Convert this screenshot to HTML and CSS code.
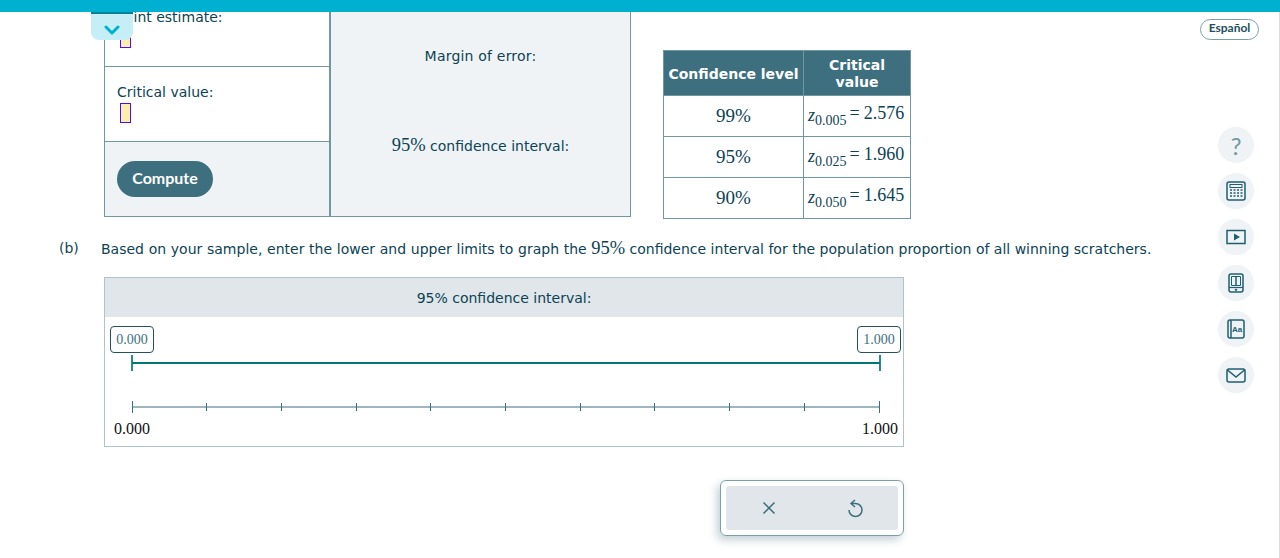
FILE: index.html
```html
<!DOCTYPE html>
<html lang="en">
<head>
    <meta charset="UTF-8">
    <title>Confidence interval</title>
    <link rel="stylesheet" href="styles.css">
</head>
<body>
    <div class="page">
        <div class="topbar"></div>
        <button class="collapse-tab" type="button">
            <svg width="16" height="10" viewBox="0 0 16 10"><path d="M2 2l6 6 6-6" fill="none" stroke="#00b0d0" stroke-width="3" stroke-linecap="round" stroke-linejoin="round"/></svg>
        </button>
        <div class="layout">
            <div class="content">
                <div class="top-row">
                    <div class="calc-box">
                        <div class="inputs">
                            <div class="input-cell">
                                <div>Point estimate:</div>
                                <span class="answer"></span>
                            </div>
                            <div class="input-cell">
                                <div>Critical value:</div>
                                <span class="answer"></span>
                            </div>
                            <div class="button-cell">
                                <button class="compute" type="button">Compute</button>
                            </div>
                        </div>
                        <div class="results">
                            <div class="result-moe">Margin of error:</div>
                            <div class="result-ci"><span class="math big">95%</span> confidence interval:</div>
                        </div>
                    </div>
                    <table class="lookup">
                        <tr><th class="col-level">Confidence level</th><th>Critical<br>value</th></tr>
                        <tr><td class="math">99%</td><td class="zval"><span class="zsym"><i>z</i><sub>0.005</sub></span><span class="eq">=</span><span class="znum">2.576</span></td></tr>
                        <tr><td class="math">95%</td><td class="zval"><span class="zsym"><i>z</i><sub>0.025</sub></span><span class="eq">=</span><span class="znum">1.960</span></td></tr>
                        <tr><td class="math">90%</td><td class="zval"><span class="zsym"><i>z</i><sub>0.050</sub></span><span class="eq">=</span><span class="znum">1.645</span></td></tr>
                    </table>
                </div>

                <div class="part">
                    <div class="part-label">(b)</div>
                    <div><span class="part-lead">Based on your sample, enter the lower and upper limits to graph the</span> <span class="math big">95%</span> confidence interval for the population proportion of all winning scratchers.</div>
                </div>

                <div class="graph">
                    <div class="graph-head">95% confidence interval:</div>
                    <div class="handles">
                        <span class="handle">0.000</span>
                        <span class="handle">1.000</span>
                    </div>
                    <svg class="plot" width="798" height="62" viewBox="0 0 798 62">
                        <path d="M27 1v16M775 1v16" stroke="#2a8a8a" stroke-width="2"/>
                        <path d="M27 9h748" stroke="#00787a" stroke-width="2"/>
                        <path d="M27 53h748" stroke="#3d6f7f"/>
                        <path d="M27.500 47v12M774.500 47v12M101.500 49v8M176.500 49v8M251.500 49v8M325.500 49v8M400.500 49v8M475.500 49v8M549.500 49v8M624.500 49v8M699.500 49v8" stroke="#3d6f7f"/>
                    </svg>
                    <div class="axis-labels">
                        <span>0.000</span>
                        <span>1.000</span>
                    </div>
                </div>

                <div class="actions-wrap">
                    <div class="actions">
                        <div class="actions-inner">
                            <svg width="14" height="14" viewBox="0 0 14 14"><path d="M1.500 1.500l11 11M12.500 1.500l-11 11" stroke="#3d6f7f" stroke-width="1.500" fill="none"/></svg>
                            <svg width="16" height="19" viewBox="0 0 16 19"><path d="M8 1L4 4.500 8 8M4 4.500H8.500A6.500 6.500 0 1 1 2 11" stroke="#3d6f7f" stroke-width="1.500" fill="none"/></svg>
                        </div>
                    </div>
                </div>
            </div>

            <div class="sidebar">
                <button class="lang" type="button">Español</button>
                <div class="tools">
                    <div class="tool tool-help">?</div>
                    <div class="tool">
                        <svg width="20" height="20" viewBox="0 0 20 20" fill="none" stroke="#1f5f72"><rect x="1" y="1" width="18" height="18" rx="2" stroke-width="1.500"/><rect x="4" y="3.500" width="12" height="3"/><path d="M4 9h2M7.500 9h2M11 9h2M14.500 9h2M4 12h2M7.500 12h2M11 12h2M14.500 12h2M4 15h2M7.500 15h2M11 15h2M14.500 15h2" stroke-width="1.500"/></svg>
                    </div>
                    <div class="tool">
                        <svg width="20" height="16" viewBox="0 0 20 16" fill="none"><rect x="1" y="1.500" width="18" height="13" stroke="#1f5f72" stroke-width="1.500"/><path d="M8 4.500l6 3.500-6 3.500z" fill="#1f5f72"/></svg>
                    </div>
                    <div class="tool">
                        <svg width="16" height="20" viewBox="0 0 16 20" fill="none" stroke="#1f5f72"><rect x="1" y="1" width="14" height="18" rx="2" stroke-width="1.500"/><path d="M3.500 3.500h4.500v9h-4.500zM8 3.500h4.500v9h-4.500z"/><path d="M1 14.500h14" stroke-width="1.200"/><circle cx="8" cy="16.800" r="0.800" fill="#1f5f72"/></svg>
                    </div>
                    <div class="tool">
                        <svg width="18" height="20" viewBox="0 0 18 20" fill="none" stroke="#1f5f72"><rect x="1" y="1" width="16" height="18" rx="2" stroke-width="1.500"/><path d="M4 1v18" stroke-width="1.500"/><text x="5" y="13" font-family="Liberation Sans, sans-serif" font-size="8" font-weight="700" fill="#1f5f72" stroke="none">Aa</text></svg>
                    </div>
                    <div class="tool">
                        <svg width="20" height="15" viewBox="0 0 20 15" fill="none" stroke="#1f5f72" stroke-width="1.500"><rect x="1" y="1" width="18" height="13" rx="2"/><path d="M1.500 2l8.500 7 8.500-7"/></svg>
                    </div>
                </div>
            </div>
        </div>
    </div>
</body>
</html>
```

FILE: styles.css
```css
html, body {
    margin: 0;
    padding: 0;
}
body {
    background-color: #fff;
    color: #0c4355;
    font-family: "DejaVu Sans", sans-serif;
    font-size: 14px;
}
.page {
    position: relative;
    height: 558px;
    overflow: hidden;
}
.topbar {
    position: relative;
    z-index: 2;
    height: 12px;
    background-color: #00b0d0;
}
.collapse-tab {
    position: absolute;
    z-index: 3;
    top: 12px;
    left: 91px;
    width: 42px;
    height: 28px;
    padding: 6px 0 0;
    border: none;
    border-top: 2px solid #0a7f98;
    border-radius: 0 0 8px 8px;
    background-color: #c6eef7;
}
.layout {
    display: flex;
    height: 546px;
    border-right: 1px solid #ddd;
}
.content {
    flex: 1;
    margin-top: -20px;
}
.math {
    font-family: "Liberation Serif", serif;
}
.big {
    font-size: 18.500px;
}

/* calculator */
.top-row {
    display: flex;
    gap: 32px;
    padding-left: 104px;
}
.calc-box {
    display: grid;
    grid-template-columns: 226px 1fr;
    width: 527px;
    height: 225px;
    box-sizing: border-box;
    border: 1px solid #6f98a3;
    border-top: none;
}
.inputs {
    display: flex;
    flex-direction: column;
    border-right: 2px solid #6f98a3;
}
.input-cell {
    height: 75px;
    box-sizing: border-box;
    padding: 17px 12px 0;
    border-bottom: 1px solid #6f98a3;
}
.answer {
    display: block;
    width: 9px;
    height: 18px;
    margin: 3px 0 0 3px;
    border: 1px solid #4a10f0;
    background-color: #fdeeb0;
}
.button-cell {
    flex: 1;
    padding: 19px 12px;
    background-color: #eff3f5;
}
.compute {
    width: 96px;
    height: 36px;
    padding: 0 0 3px;
    border: none;
    border-radius: 18px;
    background-color: #3d6f7f;
    color: #fff;
    font-family: Lato, sans-serif;
    font-size: 16px;
    font-weight: 700;
}
.results {
    background-color: #eff3f5;
    text-align: center;
}
.result-moe {
    padding-top: 56px;
    letter-spacing: 0.200px;
}
.result-ci {
    padding-top: 71px;
}

/* lookup table */
.lookup {
    width: 248px;
    height: 169px;
    margin-top: 58px;
    border-collapse: collapse;
    text-align: center;
    table-layout: fixed;
}
.lookup th, .lookup td {
    border: 1px solid #6f98a3;
    padding: 0;
}
.lookup th {
    height: 45px;
    padding-top: 2px;
    background-color: #3d6f7f;
    color: #fff;
    font-size: 14px;
    line-height: 17px;
    box-sizing: border-box;
}
.col-level {
    width: 140px;
    white-space: nowrap;
}
.lookup td {
    height: 41px;
    box-sizing: border-box;
    font-size: 18px;
    line-height: 20px;
}
.lookup td.math {
    font-size: 19px;
}
.lookup .zval {
    padding-left: 4px;
    font-family: "Liberation Serif", serif;
    text-align: left;
    white-space: nowrap;
}
.zsym {
    position: relative;
    top: -1px;
}
.zval sub {
    font-size: 14px;
    line-height: 0;
    vertical-align: -4px;
}
.eq {
    position: relative;
    top: -3px;
    padding: 0 4px 0 3px;
}
.znum {
    position: relative;
    top: -3px;
}

/* part b */
.part {
    display: flex;
    margin-top: 18px;
    padding-left: 59px;
    line-height: 22px;
}
.part-label {
    width: 42px;
}
.part-lead {
    word-spacing: 0.250px;
}

/* number line */
.graph {
    width: 798px;
    margin: 17px 0 0 104px;
    border: 1px solid #afc3ca;
}
.graph-head {
    height: 39px;
    line-height: 41px;
    background-color: #e0e6e9;
    text-align: center;
}
.handles {
    display: flex;
    justify-content: space-between;
    padding: 9px 2px 0 5px;
}
.handle {
    width: 42px;
    height: 25px;
    line-height: 25px;
    border: 1px solid #24505f;
    border-radius: 4px;
    color: #3d6f7f;
    font-family: "Liberation Serif", serif;
    font-size: 14px;
    text-align: center;
}
.plot {
    display: block;
    margin-top: 1px;
}
.axis-labels {
    display: flex;
    justify-content: space-between;
    height: 26px;
    padding: 4px 5px 0 9px;
    color: #111;
    font-family: "Liberation Serif", serif;
    font-size: 16px;
}

/* check / undo */
.actions-wrap {
    display: flex;
    justify-content: flex-end;
    width: 800px;
    margin: 33px 0 0 104px;
}
.actions {
    width: 184px;
    height: 56px;
    box-sizing: border-box;
    padding: 5px;
    border: 1px solid #7ba0ab;
    border-radius: 6px;
    box-shadow: -3px 4px 8px rgba(60, 100, 115, 0.3);
}
.actions-inner {
    display: flex;
    justify-content: space-around;
    align-items: center;
    height: 44px;
    border-radius: 3px;
    background-color: #e0e6e9;
}

/* sidebar */
.sidebar {
    display: flex;
    flex-direction: column;
    align-items: flex-start;
    width: 79px;
    padding-top: 7px;
    box-sizing: border-box;
}
.lang {
    width: 59px;
    height: 21px;
    padding: 0 0 4px;
    border: 1px solid #7ba0ab;
    border-radius: 11px;
    background-color: #fff;
    color: #24505f;
    font-family: Lato, sans-serif;
    font-size: 12px;
    font-weight: 700;
}
.tools {
    display: flex;
    flex-direction: column;
    gap: 10px;
    margin: 87px 0 0 18px;
}
.tool {
    display: flex;
    align-items: center;
    justify-content: center;
    width: 36px;
    height: 36px;
    border-radius: 50%;
    background-color: #eff3f5;
}
.tool-help {
    color: #6f98a3;
    font-family: Lato, sans-serif;
    font-size: 24px;
}
```
